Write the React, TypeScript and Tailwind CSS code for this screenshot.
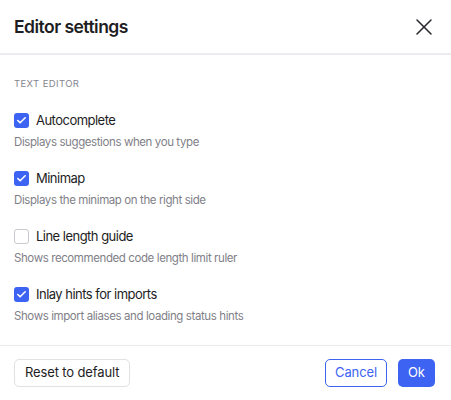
import { X, Check } from "lucide-react";

const OPTIONS = [
  { label: "Autocomplete", hint: "Displays suggestions when you type", on: true },
  { label: "Minimap", hint: "Displays the minimap on the right side", on: true },
  { label: "Line length guide", hint: "Shows recommended code length limit ruler", on: false },
  { label: "Inlay hints for imports", hint: "Shows import aliases and loading status hints", on: true },
];

function Checkbox({ on }: { on: boolean }) {
  return on ? (
    <span className="w-[15px] h-[15px] rounded-[3px] bg-[#3d63f2] flex items-center justify-center shrink-0">
      <Check size={11} strokeWidth={3.5} className="text-white" />
    </span>
  ) : (
    <span className="w-[15px] h-[15px] rounded-[3px] border border-[#c9c9cf] bg-white shrink-0" />
  );
}

export default function App() {
  return (
    <div className="w-[451px] h-[400px] bg-white text-[#1d1d22] font-['Inter',sans-serif] flex flex-col">
      {/* Header */}
      <div className="h-[55px] flex items-center justify-between pl-[14px] pr-[13px] pt-[1px] border-b-2 border-[#ececf0]">
        <h1 className="text-[17.5px] font-semibold tracking-[-0.03em]">Editor settings</h1>
        <X size={28} strokeWidth={1.3} className="text-[#2a2a30]" />
      </div>

      {/* Body */}
      <div className="flex-1 px-[14px] pt-[22px]">
        <div className="text-[9.5px] tracking-[0.04em] text-[#85858e] uppercase leading-[14px]">Text editor</div>
        <div className="mt-[21px] flex flex-col gap-[20px]">
          {OPTIONS.map((o) => (
            <div key={o.label} className="flex flex-col gap-[7px]">
              <label className="flex items-center gap-[7px] h-[16px]">
                <Checkbox on={o.on} />
                <span className="text-[13px] leading-[16px] tracking-[-0.04em]">{o.label}</span>
              </label>
              <div className="text-[11.5px] leading-[15px] tracking-[-0.035em] text-[#7f7f88]">{o.hint}</div>
            </div>
          ))}
        </div>
      </div>

      {/* Footer */}
      <div className="h-[55px] border-t border-[#ececf0] flex items-center justify-between pl-[14px] pr-[16px] pb-[1px]">
        <button className="h-[28px] px-[10px] rounded-[5px] border border-[#e2e2e6] text-[13px] tracking-[-0.01em] text-[#1d1d22]">
          Reset to default
        </button>
        <div className="flex gap-[11px]">
          <button className="h-[28px] px-[9px] rounded-[5px] border border-[#3d63f2] text-[13px] tracking-[-0.01em] text-[#3d63f2]">
            Cancel
          </button>
          <button className="h-[28px] px-[10px] rounded-[5px] bg-[#3d63f2] text-[13px] text-white">Ok</button>
        </div>
      </div>
    </div>
  );
}
